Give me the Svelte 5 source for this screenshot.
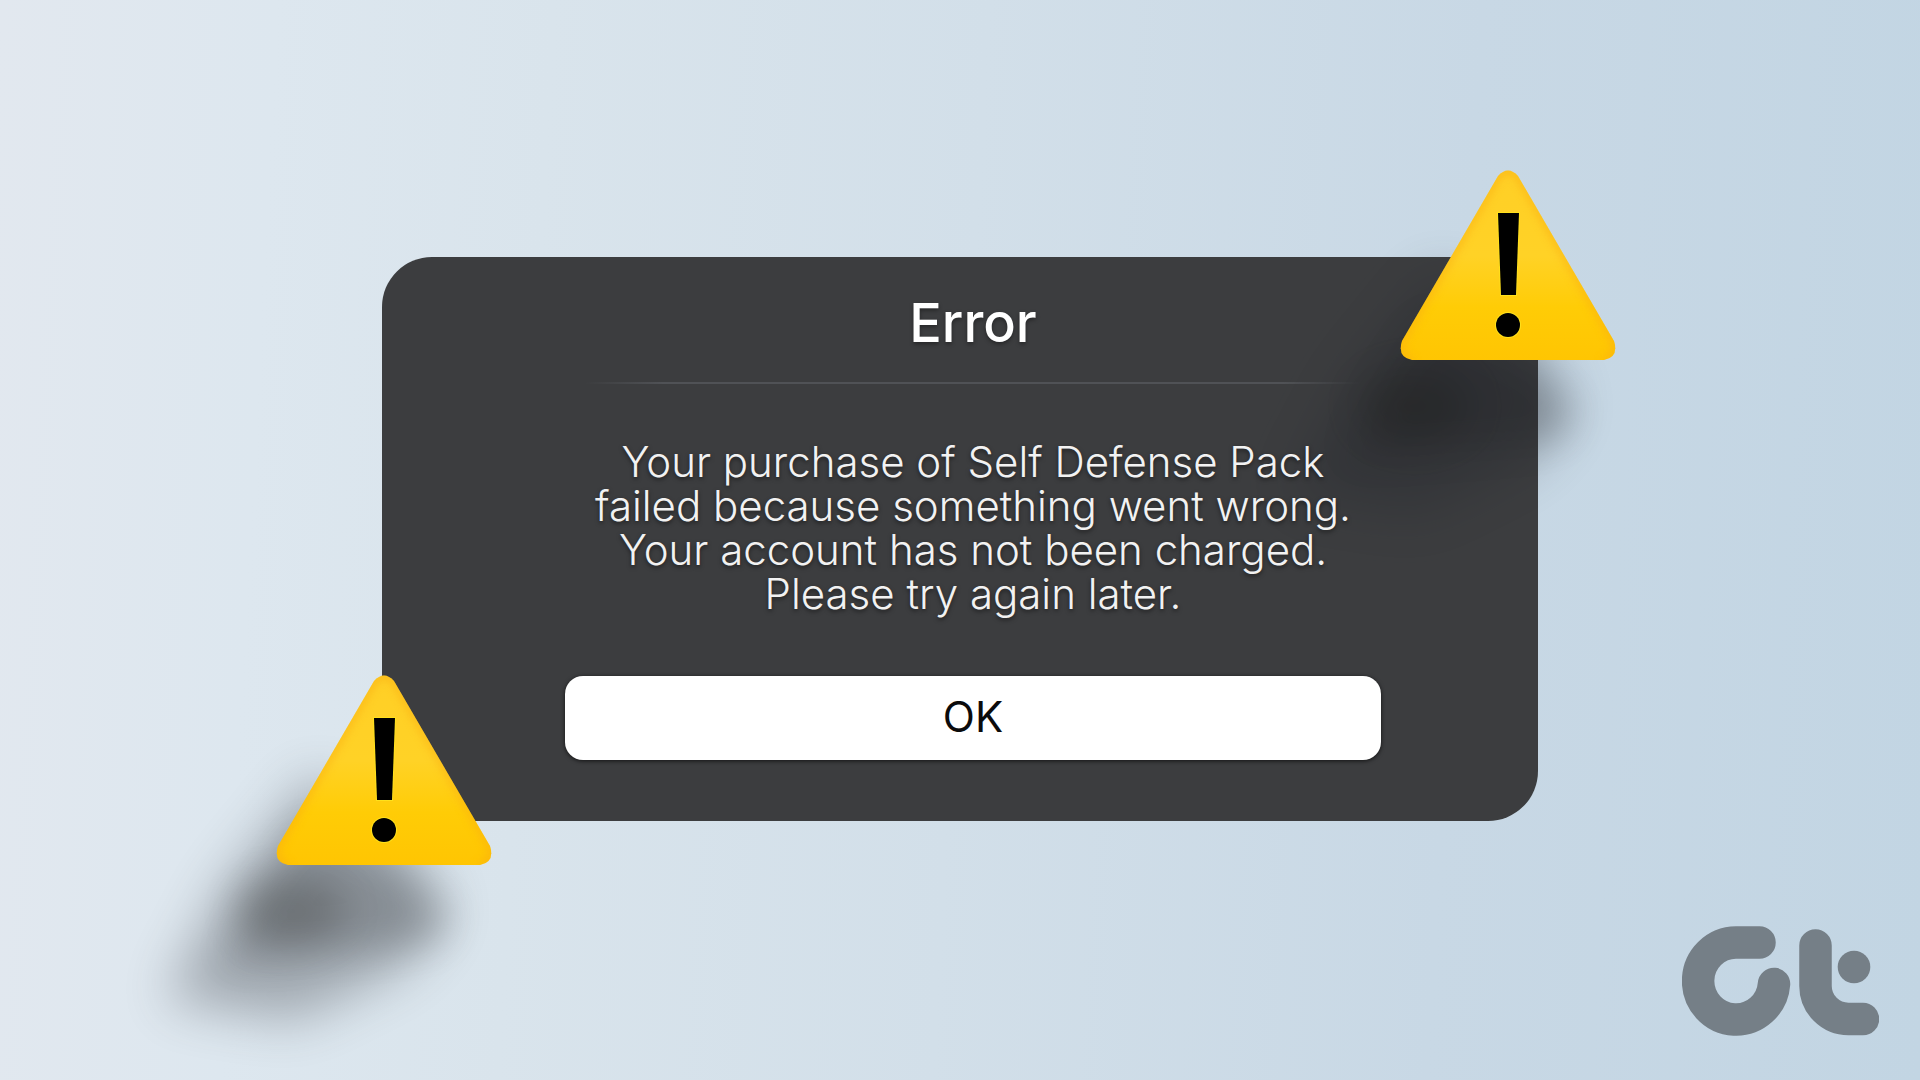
<script lang="ts">
  /**
   * Purchase error dialog with warning signs pinned to two of its corners.
   */
  const title = 'Error';
  const lines = [
    'Your purchase of Self Defense Pack',
    'failed because something went wrong.',
    'Your account has not been charged.',
    'Please try again later.'
  ];

  let open = $state(true);
</script>

{#snippet warning(id: string)}
  <svg viewBox="0 0 216 191" aria-hidden="true" color-interpolation-filters="sRGB">
    <defs>
      <linearGradient id="{id}-fill" x1="0" y1="0" x2="0" y2="1">
        <stop offset="0" stop-color="#ffcf26" />
        <stop offset="0.45" stop-color="#ffd226" />
        <stop offset="0.72" stop-color="#ffcc06" />
        <stop offset="1" stop-color="#ffc502" />
      </linearGradient>
      <clipPath id="{id}-clip">
        <path d="M98 6Q108 -5 118 6L214 171Q219 187 204 190H12Q-3 187 2 171Z" />
      </clipPath>
      <filter id="{id}-soft" x="-60%" y="-60%" width="220%" height="220%">
        <feGaussianBlur stdDeviation="26" />
      </filter>
      <filter id="{id}-core" x="-100%" y="-100%" width="300%" height="300%">
        <feGaussianBlur stdDeviation="19" />
      </filter>
      <filter id="{id}-edge" x="-20%" y="-20%" width="140%" height="140%">
        <feGaussianBlur stdDeviation="4" />
      </filter>
    </defs>
    <path
      d="M40 100L-50 210L-110 325L20 345L130 290L170 240L140 180Z"
      fill="#23262d"
      opacity="0.32"
      filter="url(#{id}-soft)"
    />
    <path
      d="M30 150L-15 215L-50 285L80 275L160 268L176 240L130 200Z"
      fill="#15171a"
      opacity="0.18"
      filter="url(#{id}-core)"
    />
    <ellipse cx="15" cy="236" rx="54" ry="34" fill="#15150f" opacity="0.22" filter="url(#{id}-core)" />
    <g clip-path="url(#{id}-clip)">
      <rect width="216" height="191" fill="url(#{id}-fill)" />
      <path
        d="M12 190Q-3 187 2 171L98 6Q108 -5 118 6L214 171Q219 187 204 190"
        fill="none"
        stroke="#f9ae12"
        stroke-width="4"
        filter="url(#{id}-edge)"
      />
    </g>
    <path d="M98 43H119L116 125H101Z" stroke="#ffe11c" stroke-width="2" paint-order="stroke" />
    <circle cx="108" cy="155" r="12" stroke="#ffe11c" stroke-width="2" paint-order="stroke" />
  </svg>
{/snippet}

<main class="page">
  {#if open}
    <div class="dialog" role="alertdialog" aria-labelledby="dialog-title" aria-describedby="dialog-text">
      <div class="sign sign-top">{@render warning('top')}</div>
      <div class="sign sign-bottom">{@render warning('bottom')}</div>
      <h1 class="title" id="dialog-title">{title}</h1>
      <div class="divider"></div>
      <p class="message" id="dialog-text">
        {#each lines as line}
          <span>{line}</span>
        {/each}
      </p>
      <button type="button" class="confirm" onclick={() => (open = false)}>OK</button>
    </div>
  {/if}

  <svg class="logo" viewBox="0 0 197 111" role="img" aria-label="Guiding Tech">
    <g fill="none" stroke="#757f87" stroke-width="32.5" stroke-linecap="round">
      <path d="M77.5 16.5H54A38 38.5 0 1 0 92 58" stroke-linejoin="round" />
      <path d="M133.5 19.5V60A33 33 0 0 0 166.5 93H181" />
    </g>
    <circle cx="172" cy="41" r="16.3" fill="#757f87" />
  </svg>
</main>

<style>
  :global(body) {
    margin: 0;
  }

  .page {
    position: relative;
    display: grid;
    place-items: center;
    box-sizing: border-box;
    min-height: 100vh;
    padding-bottom: 2px;
    overflow: hidden;
    background: linear-gradient(93deg, #e2e8ef 0%, #dde7ef 14%, #d9e4ec 28%, #d2dfe9 50%, #c8d8e5 75%, #c2d5e3 100%);
    font-family: Inter, 'Open Sans', sans-serif;
  }

  .dialog {
    position: relative;
    display: flex;
    flex-direction: column;
    box-sizing: border-box;
    width: 100%;
    max-width: 1156px;
    padding: 34px 157px 61px 183px;
    border-radius: 50px;
    background: #3c3d3f;
    text-align: center;
  }

  .title {
    position: relative;
    margin: 0;
    color: #fff;
    font-size: 54px;
    font-weight: 500;
    line-height: 64px;
    text-shadow: 0 2px 4px rgba(0, 0, 0, 0.4);
  }

  .divider {
    height: 2px;
    margin: 27px 20px 56px;
    background: linear-gradient(90deg, transparent, #505256 10%, #505256 90%, transparent);
  }

  .message {
    position: relative;
    margin: 0 0 60px;
    color: #f2f2f2;
    font-size: 42px;
    font-weight: 300;
    line-height: 44px;
    text-shadow: 0 2px 4px rgba(0, 0, 0, 0.5);
  }

  .message span {
    display: block;
  }

  .confirm {
    height: 84px;
    padding: 0 0 4px;
    border: none;
    border-radius: 18px;
    background: #fff;
    color: #0b0b0c;
    box-shadow: 0 1px 4px rgba(0, 0, 0, 0.7);
    font-family: inherit;
    font-size: 42px;
    font-weight: 400;
    cursor: pointer;
  }

  .confirm:focus-visible {
    outline: 3px solid #ffcc06;
    outline-offset: 3px;
  }

  .sign {
    position: absolute;
    width: 216px;
    pointer-events: none;
  }

  .sign svg {
    display: block;
    overflow: visible;
  }

  .sign-top {
    top: -87px;
    right: -78px;
  }

  .sign-bottom {
    bottom: -45px;
    left: -106px;
  }

  .logo {
    position: absolute;
    right: 41px;
    bottom: 43px;
    width: 197px;
  }
</style>
